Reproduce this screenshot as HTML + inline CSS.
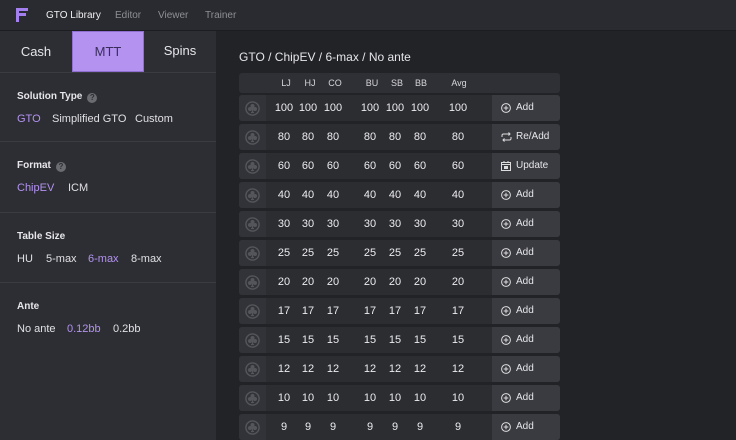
<!DOCTYPE html><html><head><style>
*{margin:0;padding:0;box-sizing:border-box}
body{width:736px;height:440px;overflow:hidden;background:#222327;font-family:"Liberation Sans",sans-serif;color:#e6e6ea;position:relative}
.top{position:absolute;left:0;top:0;width:736px;height:31px;background:#2a2b30;border-bottom:1px solid #1c1d20}
.top span{position:absolute;top:10px;font-size:10px;color:#8e8f96}
.side{position:absolute;left:0;top:31px;width:216px;height:409px;background:#2d2e33}
.tab{position:absolute;top:0;height:41px;font-size:13px;line-height:41px;text-align:center;color:#e6e6ea}
.sec{position:absolute;left:0;width:216px;border-top:1px solid #3b3c42}
.h{position:absolute;left:17px;font-size:10px;font-weight:bold;color:#e6e6ea}
.q{display:inline-block;width:10px;height:10px;border-radius:50%;background:#6b6c72;color:#2d2e33;font-size:8px;text-align:center;line-height:10px;margin-left:5px;vertical-align:-1px}
.o{position:absolute;font-size:11px;color:#e0e0e4}
.p{color:#b392f0}
.title{position:absolute;left:239px;top:50px;font-size:12px;color:#e6e6ea}
.hdr{position:absolute;left:239px;top:73px;width:321px;height:20px;background:#2f3035;border-radius:3px}
.c{position:absolute;font-size:11px;text-align:center;width:30px;margin-left:-15px}
.hdr .c{font-size:9px;top:5px;color:#d6d6da}
.row{position:absolute;left:239px;width:321px;height:26px;background:#2c2d31;border-radius:3px;overflow:hidden}
.row .c{top:7px;color:#ececf0}
.ic{position:absolute;left:0;top:0;width:27px;height:26px;background:#323338}
.ic svg{position:absolute;left:6px;top:6px}
.btn{position:absolute;left:253px;top:0;width:68px;height:26px;background:#3a3b40;font-size:10px;line-height:26px;padding-left:24px;color:#e6e6ea}
.btn svg{position:absolute;left:9px;top:8px}
</style></head><body>
<div class="top">
<svg style="position:absolute;left:16px;top:8px" width="12" height="14" viewBox="0 0 12 14"><path d="M0 0h12v3H3v2h7v3H3v6H0z" fill="#a37ff0"/></svg>
<span style="left:46px;color:#f0f0f2">GTO Library</span><span style="left:115px">Editor</span><span style="left:158px">Viewer</span><span style="left:205px">Trainer</span></div>
<div class="side">
<div class="tab" style="left:0;width:72px;line-height:42px">Cash</div>
<div class="tab" style="left:72px;width:72px;height:41px;background:#b392f0;color:#3a2d5c;border:1px solid #8f6fd0;line-height:40px">MTT</div>
<div class="tab" style="left:144px;width:72px;line-height:40px">Spins</div>
<div class="sec" style="top:41px"></div>
<div class="h" style="top:60px">Solution Type<span class="q">?</span></div>
<div class="o p" style="left:17px;top:82px">GTO</div><div class="o" style="left:52px;top:82px">Simplified GTO</div><div class="o" style="left:135px;top:82px">Custom</div>
<div class="sec" style="top:110px"></div>
<div class="h" style="top:129px">Format<span class="q">?</span></div>
<div class="o p" style="left:17px;top:151px">ChipEV</div><div class="o" style="left:68px;top:151px">ICM</div>
<div class="sec" style="top:181px"></div>
<div class="h" style="top:200px">Table Size</div>
<div class="o" style="left:17px;top:222px">HU</div><div class="o" style="left:46px;top:222px">5-max</div><div class="o p" style="left:88px;top:222px">6-max</div><div class="o" style="left:131px;top:222px">8-max</div>
<div class="sec" style="top:251px"></div>
<div class="h" style="top:270px">Ante</div>
<div class="o" style="left:17px;top:292px">No ante</div><div class="o p" style="left:67px;top:292px">0.12bb</div><div class="o" style="left:113px;top:292px">0.2bb</div>
</div>
<div class="title">GTO / ChipEV / 6-max / No ante</div>
<div class="hdr"><span class="c" style="left:47px">LJ</span><span class="c" style="left:71px">HJ</span><span class="c" style="left:96px">CO</span><span class="c" style="left:133px">BU</span><span class="c" style="left:158px">SB</span><span class="c" style="left:182px">BB</span><span class="c" style="left:220px">Avg</span></div>
<div id="rows"></div>
<script>
var club='<svg width="15" height="15" viewBox="0 0 15 15"><circle cx="7.5" cy="7.5" r="6.6" fill="none" stroke="#55565c" stroke-width="1.4"/><circle cx="7.5" cy="5" r="2" fill="#55565c"/><circle cx="5" cy="8" r="2" fill="#55565c"/><circle cx="10" cy="8" r="2" fill="#55565c"/><path d="M7.5 7v4M6 11.5h3" stroke="#55565c" stroke-width="1.2"/></svg>';
var add='<svg width="10" height="10" viewBox="0 0 10 10"><circle cx="5" cy="5" r="4.4" fill="none" stroke="#ddd" stroke-width="1"/><path d="M5 2.7v4.6M2.7 5h4.6" stroke="#ddd" stroke-width="1"/></svg>';
var re='<svg width="11" height="10" viewBox="0 0 11 10"><path d="M1 5V3.5Q1 2 2.5 2H9M7.5 0.5L9 2 7.5 3.5M10 5v1.5Q10 8 8.5 8H2M3.5 6.5L2 8 3.5 9.5" fill="none" stroke="#ddd" stroke-width="1"/></svg>';
var up='<svg width="10" height="10" viewBox="0 0 10 10"><rect x="0.5" y="1.5" width="9" height="8" fill="none" stroke="#ddd"/><path d="M0.5 3.5h9M3 0v2M7 0v2" stroke="#ddd"/><rect x="3" y="5" width="4" height="3" fill="#ddd"/></svg>';
var v=[100,80,60,40,30,25,20,17,15,12,10,9],h='';
v.forEach(function(n,i){var b=i==1?[re,'Re/Add']:i==2?[up,'Update']:[add,'Add'];
var xs=[45,69,94,131,156,181,219],c='';xs.forEach(function(x){c+='<span class="c" style="left:'+x+'px">'+n+'</span>'});
h+='<div class="row" style="top:'+(95+i*29)+'px"><div class="ic">'+club+'</div>'+c+'<div class="btn">'+b[0]+b[1]+'</div></div>'});
document.getElementById('rows').innerHTML=h;
</script>
</body></html>
